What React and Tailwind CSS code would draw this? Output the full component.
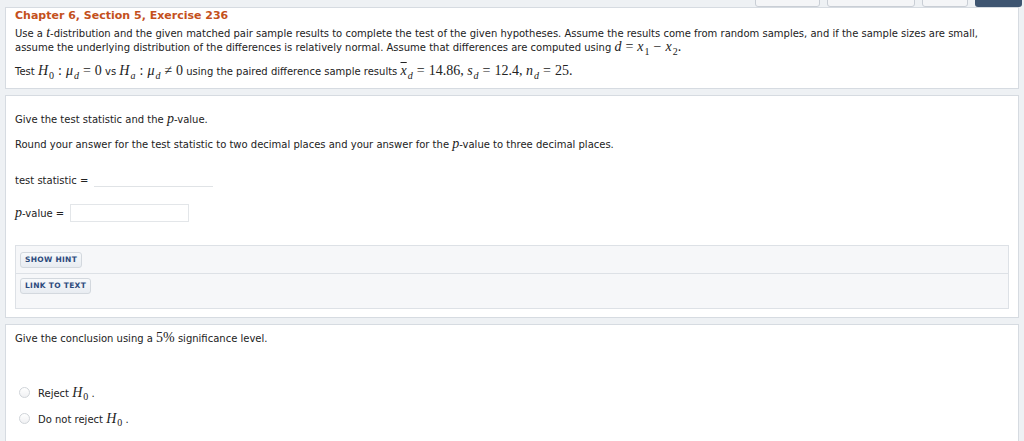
import React from "react";

const sans = { fontFamily: '"DejaVu Sans", Verdana, sans-serif' };

function M({ children }) {
  return <span className="font-['Liberation_Serif',serif] text-[14px] leading-none">{children}</span>;
}

function O({ children }) {
  return <span className="inline-block mx-[4px]">{children}</span>;
}

function V({ children, sub, upright }) {
  return (
    <span className="italic">
      {children}
      {sub !== undefined && (
        <sub className={"text-[10px] leading-none align-[-1px] ml-[1px] " + (upright ? "not-italic" : "")}>{sub}</sub>
      )}
    </span>
  );
}

function Panel({ className = "", children }) {
  return (
    <div className={"mx-[5px] bg-white border border-[#d6dbe1] " + className}>{children}</div>
  );
}

function Radio({ children }) {
  return (
    <label className="flex items-center gap-[8px] h-[13px]">
      <span className="w-[11px] h-[11px] rounded-full border border-[#d0d4d9] bg-gradient-to-b from-white to-[#f0f1f3] shrink-0"></span>
      <span>{children}</span>
    </label>
  );
}

function HintButton({ children }) {
  return (
    <button className="h-[16px] px-[4px] rounded-[3px] border border-[#d3d8de] bg-gradient-to-b from-[#f7f9fb] to-[#e8ecf1] text-[7.5px] leading-none font-bold tracking-[0.3px] text-[#2c4a7c]">
      {children}
    </button>
  );
}

export default function App() {
  return (
    <div
      className="w-[1024px] h-[441px] overflow-hidden bg-[#eef1f4] text-[10px] leading-[13px] text-[#222]"
      style={sans}
    >
      {/* top toolbar, mostly scrolled off */}
      <div className="h-[7px] flex items-end justify-end gap-[7px] pr-[2px] overflow-hidden">
        <div className="w-[65px] h-[20px] shrink-0 rounded-b-[3px] border border-[#c9ced5] bg-[#f4f5f7]"></div>
        <div className="w-[88px] h-[20px] shrink-0 rounded-b-[3px] border border-[#c9ced5] bg-[#f4f5f7]"></div>
        <div className="w-[46px] h-[20px] shrink-0 rounded-b-[3px] border border-[#c9ced5] bg-[#f4f5f7]"></div>
        <div className="w-[47px] h-[20px] shrink-0 rounded-b-[3px] bg-[#3e5571]"></div>
      </div>

      <Panel className="h-[82px] pl-[9px] pt-[1px]">
        <div className="text-[11px] font-bold text-[#c4501c] leading-[14px]">
          Chapter 6, Section 5, Exercise 236
        </div>
        <div className="mt-[3px]">
          Use a <M><V>t</V></M>-distribution and the given matched pair sample results to complete the test of
          the given hypotheses. Assume the results come from random samples, and if the sample sizes are small,
          <br />
          assume the underlying distribution of the differences is relatively normal. Assume that differences are
          computed using{" "}
          <M>
            <V>d</V>
            <O>=</O>
            <V sub="1" upright>x</V>
            <O>−</O>
            <V sub="2" upright>x</V>.
          </M>
        </div>
        <div className="mt-[10px]">
          Test{" "}
          <M>
            <V sub="0" upright>H</V>
            <O>:</O>
            <V sub="d">μ</V>
            <O>=</O>0
          </M>{" "}
          vs{" "}
          <M>
            <V sub="a">H</V>
            <O>:</O>
            <V sub="d">μ</V>
            <O>≠</O>0
          </M>{" "}
          using the paired difference sample results{" "}
          <M>
            <span className="italic overline">x</span>
            <sub className="text-[10px] leading-none italic align-[-1px] ml-[1px]">d</sub>
            <O>=</O>14.86, <V sub="d">s</V>
            <O>=</O>12.4, <V sub="d">n</V>
            <O>=</O>25.
          </M>
        </div>
      </Panel>

      <Panel className="mt-[6px] h-[223px] pt-[16px] pb-[8px] flex flex-col">
        <div className="pl-[9px]">
          Give the test statistic and the <M><V>p</V></M>-value.
        </div>
        <div className="pl-[9px] mt-[11px]">
          Round your answer for the test statistic to two decimal places and your answer for the{" "}
          <M><V>p</V></M>-value to three decimal places.
        </div>
        <div className="pl-[9px] mt-[22px] flex items-center gap-[6px]">
          <span>test statistic =</span>
          <span className="w-[119px] h-[14px] border-b border-[#e0e3e6]"></span>
        </div>
        <div className="pl-[9px] mt-[17px] flex items-center gap-[6px]">
          <span>
            <M><V>p</V></M>-value =
          </span>
          <span className="w-[119px] h-[18px] border border-[#e3e6e9]"></span>
        </div>
        <div className="mt-auto mx-[9px] bg-[#f6f7f9] border border-[#dde1e6]">
          <div className="h-[28px] flex items-center pl-[4px] border-b border-[#dde1e6]">
            <HintButton>SHOW HINT</HintButton>
          </div>
          <div className="h-[34px] pt-[4px] pl-[4px]">
            <HintButton>LINK TO TEXT</HintButton>
          </div>
        </div>
      </Panel>

      <Panel className="mt-[6px] h-[118px] pt-[6px] pl-[9px]">
        <div>
          Give the conclusion using a <M>5%</M> significance level.
        </div>
        <div className="mt-[41px] pl-[4px] flex flex-col gap-[13px]">
          <Radio>
            Reject <M><V sub="0" upright>H</V></M> .
          </Radio>
          <Radio>
            Do not reject <M><V sub="0" upright>H</V></M> .
          </Radio>
        </div>
      </Panel>
    </div>
  );
}
